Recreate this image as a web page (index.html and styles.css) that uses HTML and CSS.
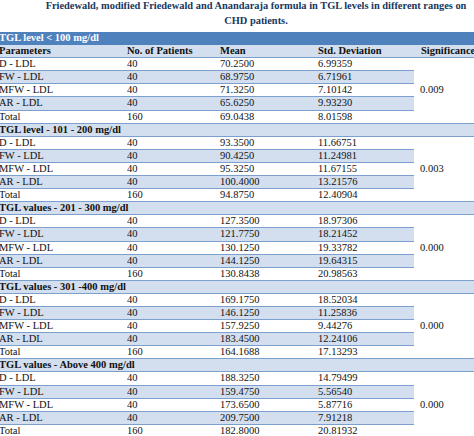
FILE: index.html
```html
<!DOCTYPE html>
<html>
<head>
<meta charset="utf-8">
<link rel="stylesheet" href="styles.css">
</head>
<body>
<div class="page">
  <h1 class="title"><span class="tl">Friedewald, modified Friedewald and Anandaraja formula in TGL levels in different ranges on</span><span class="tl">CHD patients.</span></h1>
  <table class="data">
    <colgroup>
      <col class="c1"><col class="c2"><col class="c3"><col class="c4"><col class="c5">
    </colgroup>
    <tr class="sec first"><td colspan="5">TGL level &lt; 100 mg/dl</td></tr>
    <tr class="head band"><td>Parameters</td><td>No. of Patients</td><td>Mean</td><td>Std. Deviation</td><td class="sig-h">Significance</td></tr>
    <tr><td>D - LDL</td><td>40</td><td>70.2500</td><td>6.99359</td><td class="sig" rowspan="5">0.009</td></tr>
    <tr class="band"><td>FW - LDL</td><td>40</td><td>68.9750</td><td>6.71961</td></tr>
    <tr><td>MFW - LDL</td><td>40</td><td>71.3250</td><td>7.10142</td></tr>
    <tr class="band"><td>AR - LDL</td><td>40</td><td>65.6250</td><td>9.93230</td></tr>
    <tr><td>Total</td><td>160</td><td>69.0438</td><td>8.01598</td></tr>

    <tr class="sec"><td colspan="5">TGL level - 101 - 200 mg/dl</td></tr>
    <tr><td>D - LDL</td><td>40</td><td>93.3500</td><td>11.66751</td><td class="sig" rowspan="5">0.003</td></tr>
    <tr class="band"><td>FW - LDL</td><td>40</td><td>90.4250</td><td>11.24981</td></tr>
    <tr><td>MFW - LDL</td><td>40</td><td>95.3250</td><td>11.67155</td></tr>
    <tr class="band"><td>AR - LDL</td><td>40</td><td>100.4000</td><td>13.21576</td></tr>
    <tr><td>Total</td><td>160</td><td>94.8750</td><td>12.40904</td></tr>

    <tr class="sec"><td colspan="5">TGL values - 201 - 300 mg/dl</td></tr>
    <tr><td>D - LDL</td><td>40</td><td>127.3500</td><td>18.97306</td><td class="sig" rowspan="5">0.000</td></tr>
    <tr class="band"><td>FW - LDL</td><td>40</td><td>121.7750</td><td>18.21452</td></tr>
    <tr><td>MFW - LDL</td><td>40</td><td>130.1250</td><td>19.33782</td></tr>
    <tr class="band"><td>AR - LDL</td><td>40</td><td>144.1250</td><td>19.64315</td></tr>
    <tr><td>Total</td><td>160</td><td>130.8438</td><td>20.98563</td></tr>

    <tr class="sec"><td colspan="5">TGL values - 301 -400 mg/dl</td></tr>
    <tr><td>D - LDL</td><td>40</td><td>169.1750</td><td>18.52034</td><td class="sig" rowspan="5">0.000</td></tr>
    <tr class="band"><td>FW - LDL</td><td>40</td><td>146.1250</td><td>11.25836</td></tr>
    <tr><td>MFW - LDL</td><td>40</td><td>157.9250</td><td>9.44276</td></tr>
    <tr class="band"><td>AR - LDL</td><td>40</td><td>183.4500</td><td>12.24106</td></tr>
    <tr><td>Total</td><td>160</td><td>164.1688</td><td>17.13293</td></tr>

    <tr class="sec"><td colspan="5">TGL values - Above 400 mg/dl</td></tr>
    <tr><td>D - LDL</td><td>40</td><td>188.3250</td><td>14.79499</td><td class="sig" rowspan="5">0.000</td></tr>
    <tr class="band"><td>FW - LDL</td><td>40</td><td>159.4750</td><td>5.56540</td></tr>
    <tr><td>MFW - LDL</td><td>40</td><td>173.6500</td><td>5.87716</td></tr>
    <tr class="band"><td>AR - LDL</td><td>40</td><td>209.7500</td><td>7.91218</td></tr>
    <tr><td>Total</td><td>160</td><td>182.8000</td><td>20.81932</td></tr>
  </table>
</div>
</body>
</html>
```
FILE: styles.css
```css
html, body {
  margin: 0;
  padding: 0;
  background: #ffffff;
}
body {
  width: 474px;
  height: 436px;
  overflow: hidden;
  font-family: "Liberation Serif", "Times New Roman", serif;
  color: #111111;
}
.page {
  display: flex;
  flex-direction: column;
}
.title {
  margin: -2px 0 4px 0;
  padding-left: 38px;
  font-size: 10.4px;
  line-height: 15px;
  font-weight: bold;
  text-align: center;
  color: #17375e;
  display: flex;
  flex-direction: column;
  align-items: center;
}
.tl {
  display: block;
  white-space: nowrap;
}
.data {
  border-collapse: collapse;
  table-layout: fixed;
  width: 475px;
  margin-left: -1px;
  font-size: 10.5px;
}
.c1 { width: 128px; }
.c2 { width: 93px; }
.c3 { width: 98px; }
.c4 { width: 96px; }
.c5 { width: 60px; }
.data td {
  padding: 0;
  height: 12.1px;
  line-height: 12.1px;
  white-space: nowrap;
  overflow: hidden;
  border-bottom: 1px solid #7ba0cd;
  vertical-align: middle;
}
.data tr.band td {
  background: #d3dfee;
}
.data tr.sec td {
  background: #d3dfee;
  font-weight: bold;
  border-top: 1px solid #7ba0cd;
}
.data tr.sec.first td {
  background: #4f81bd;
  color: #ffffff;
  border-top: none;
  border-bottom: 1px solid #4f81bd;
}
.data tr.head td {
  font-weight: bold;
}
.data td.sig-h {
  padding-left: 7px;
}
.data td.sig {
  background: #ffffff;
  border-bottom: none;
  padding-left: 6px;
}
```
